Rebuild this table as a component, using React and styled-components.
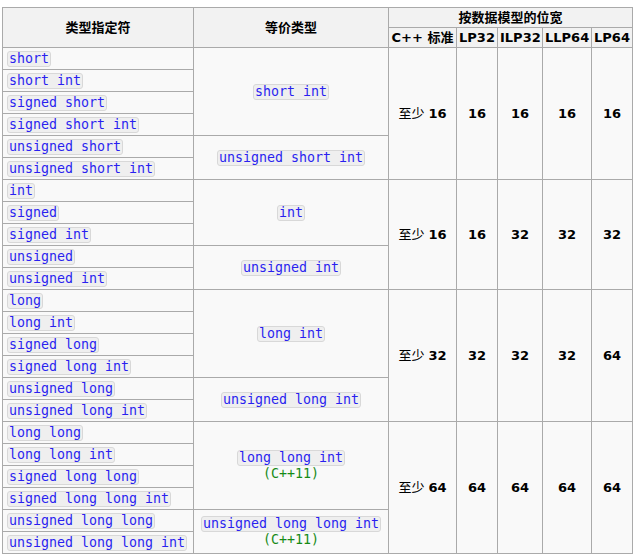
import styled, { createGlobalStyle } from "styled-components";

const GlobalStyle = createGlobalStyle`
  body {
    margin: 7px 0 0 2px;
    background: #fff;
    font-family: "DejaVu Sans", "Noto Sans CJK SC", sans-serif;
    font-size: 13px;
    color: #000;
  }
`;

const Table = styled.table`
  border-collapse: collapse;
  table-layout: fixed;
  width: 630px;
  background: #f9f9f9;
`;

const HeadCell = styled.th`
  background: #f2f2f2;
  border: 1px solid #aaa;
  height: 19px;
  padding: 0 2px;
  font-weight: bold;
  text-align: center;
  vertical-align: middle;
  line-height: 15px;
  white-space: nowrap;
`;

const Cell = styled.td`
  border: 1px solid #aaa;
  height: 21px;
  padding: 0 4px;
  text-align: ${(p) => (p.$center ? "center" : "left")};
  vertical-align: middle;
  line-height: 15px;
  white-space: nowrap;
`;

const Code = styled.code`
  display: inline-block;
  font-family: "DejaVu Sans Mono", monospace;
  font-size: 13.3px;
  line-height: 14px;
  color: #2a1ff0;
  background: #efefef;
  border: 1px solid #d8d8d8;
  border-radius: 3px;
  padding: 0 1px;
  vertical-align: middle;
`;

const Rev = styled.div`
  font-family: "DejaVu Sans Mono", monospace;
  font-size: 13.3px;
  line-height: 16px;
  color: #168a16;
`;

const widths = [191, 195, 68, 41, 45, 49, 41];

const groups = [
  {
    bits: ["至少 16", "16", "16", "16", "16"],
    parts: [
      { equiv: "short int", names: ["short", "short int", "signed short", "signed short int"] },
      { equiv: "unsigned short int", names: ["unsigned short", "unsigned short int"] },
    ],
  },
  {
    bits: ["至少 16", "16", "32", "32", "32"],
    parts: [
      { equiv: "int", names: ["int", "signed", "signed int"] },
      { equiv: "unsigned int", names: ["unsigned", "unsigned int"] },
    ],
  },
  {
    bits: ["至少 32", "32", "32", "32", "64"],
    parts: [
      { equiv: "long int", names: ["long", "long int", "signed long", "signed long int"] },
      { equiv: "unsigned long int", names: ["unsigned long", "unsigned long int"] },
    ],
  },
  {
    bits: ["至少 64", "64", "64", "64", "64"],
    parts: [
      {
        equiv: "long long int",
        rev: true,
        names: ["long long", "long long int", "signed long long", "signed long long int"],
      },
      { equiv: "unsigned long long int", rev: true, names: ["unsigned long long", "unsigned long long int"] },
    ],
  },
];

function Bits({ text }) {
  const [prefix, num] = text.includes(" ") ? text.split(" ") : [null, text];
  return (
    <>
      {prefix && `${prefix} `}
      <b>{num}</b>
    </>
  );
}

function groupRows(group, gi) {
  const total = group.parts.reduce((n, p) => n + p.names.length, 0);
  const rows = [];
  group.parts.forEach((part, pi) => {
    part.names.forEach((name, ni) => {
      rows.push(
        <tr key={`${gi}-${pi}-${ni}`}>
          <Cell>
            <Code>{name}</Code>
          </Cell>
          {ni === 0 && (
            <Cell $center rowSpan={part.names.length}>
              <Code>{part.equiv}</Code>
              {part.rev && <Rev>(C++11)</Rev>}
            </Cell>
          )}
          {pi === 0 &&
            ni === 0 &&
            group.bits.map((b, bi) => (
              <Cell $center key={bi} rowSpan={total}>
                <Bits text={b} />
              </Cell>
            ))}
        </tr>
      );
    });
  });
  return rows;
}

export default function App() {
  return (
    <>
      <GlobalStyle />
      <Table>
        <colgroup>
          {widths.map((w, i) => (
            <col key={i} style={{ width: w }} />
          ))}
        </colgroup>
        <thead>
          <tr>
            <HeadCell rowSpan={2}>类型指定符</HeadCell>
            <HeadCell rowSpan={2}>等价类型</HeadCell>
            <HeadCell colSpan={5}>按数据模型的位宽</HeadCell>
          </tr>
          <tr>
            <HeadCell>C++ 标准</HeadCell>
            <HeadCell>LP32</HeadCell>
            <HeadCell>ILP32</HeadCell>
            <HeadCell>LLP64</HeadCell>
            <HeadCell>LP64</HeadCell>
          </tr>
        </thead>
        <tbody>{groups.map((g, gi) => groupRows(g, gi))}</tbody>
      </Table>
    </>
  );
}
